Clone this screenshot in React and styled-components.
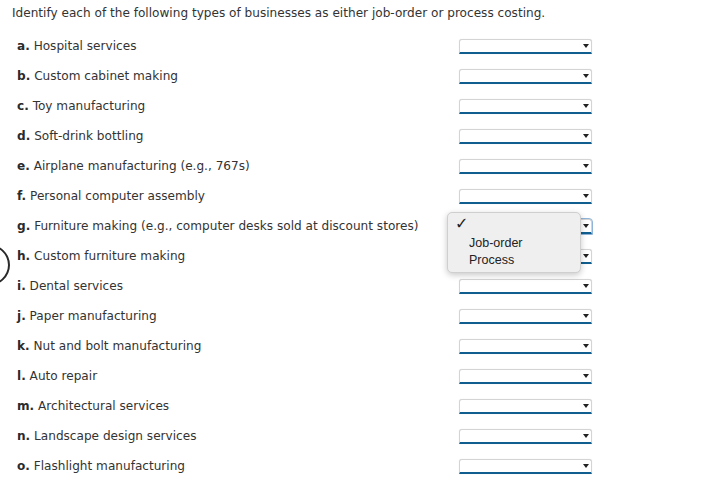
import React from 'react';
import styled, { createGlobalStyle } from 'styled-components';

const GlobalStyle = createGlobalStyle`
  html, body {
    margin: 0;
    padding: 0;
    background: #ffffff;
  }
  body {
    font-family: "DejaVu Sans", Verdana, sans-serif;
    color: #333333;
  }
`;

const ITEMS = [
  ['a.', 'Hospital services'],
  ['b.', 'Custom cabinet making'],
  ['c.', 'Toy manufacturing'],
  ['d.', 'Soft-drink bottling'],
  ['e.', 'Airplane manufacturing (e.g., 767s)'],
  ['f.', 'Personal computer assembly'],
  ['g.', 'Furniture making (e.g., computer desks sold at discount stores)'],
  ['h.', 'Custom furniture making'],
  ['i.', 'Dental services'],
  ['j.', 'Paper manufacturing'],
  ['k.', 'Nut and bolt manufacturing'],
  ['l.', 'Auto repair'],
  ['m.', 'Architectural services'],
  ['n.', 'Landscape design services'],
  ['o.', 'Flashlight manufacturing'],
];

const Page = styled.div`
  position: relative;
  width: 723px;
  height: 501px;
  overflow: hidden;
`;

const Title = styled.p`
  margin: 0;
  padding: 5px 0 10px 12px;
  font-size: 12.1px;
  line-height: 16px;
  color: #333333;
`;

const List = styled.div`
  display: flex;
  flex-direction: column;
`;

const Row = styled.div`
  position: relative;
  display: grid;
  grid-template-columns: 442px 133px;
  align-items: center;
  height: 30px;
  padding-left: 17px;
`;

const Label = styled.span`
  font-size: 12.1px;
  line-height: 16px;
  color: #333333;
  white-space: nowrap;
`;

const Letter = styled.b`
  font-weight: bold;
  color: #2b2b2b;
`;

const Select = styled.div`
  position: relative;
  height: 15px;
  box-sizing: border-box;
  background: #ffffff;
  border: 1px solid #d4d4d4;
  border-bottom: 2px solid #0f5e8f;
  border-radius: 3px 3px 0 0;
  box-shadow: 0 0 1px rgba(0, 0, 0, 0.15);
  outline: ${p => (p.focused ? '1px solid #8fb3d9' : 'none')};
`;

const Arrow = styled.span`
  position: absolute;
  right: 2px;
  top: 4px;
  width: 0;
  height: 0;
  border-left: 3.5px solid transparent;
  border-right: 3.5px solid transparent;
  border-top: 4px solid #222222;
`;

const Menu = styled.div`
  position: absolute;
  left: 447px;
  top: 1px;
  width: 134px;
  height: 61px;
  box-sizing: border-box;
  background: #efefef;
  border: 1px solid #cfcfcf;
  border-radius: 5px;
  box-shadow: 0 2px 6px rgba(0, 0, 0, 0.22);
  padding: 2px 0 0 0;
  font-family: "Liberation Sans", Arial, sans-serif;
  font-size: 12.5px;
  color: #222222;
  z-index: 2;
`;

const MenuItem = styled.div`
  padding-left: 21px;
  height: 17px;
  line-height: 17px;
`;

const CheckItem = styled.div`
  padding-left: 7px;
  height: 20px;
  line-height: 18px;
  font-size: 16px;
  font-weight: bold;
  font-family: "DejaVu Sans", sans-serif;
`;

const Ring = styled.div`
  position: absolute;
  left: -34px;
  top: 244px;
  width: 40px;
  height: 38px;
  border: 2px solid #2a2a2a;
  border-radius: 50%;
`;

const App = () => (
  <Page>
    <GlobalStyle />
    <Title>Identify each of the following types of businesses as either job-order or process costing.</Title>
    <List>
      {ITEMS.map(([letter, text], i) => (
        <Row key={letter}>
          <Label>
            <Letter>{letter}</Letter> {text}
          </Label>
          <Select focused={i === 6}>
            <Arrow />
          </Select>
          {i === 6 && (
            <Menu>
              <CheckItem>✓</CheckItem>
              <MenuItem>Job-order</MenuItem>
              <MenuItem>Process</MenuItem>
            </Menu>
          )}
        </Row>
      ))}
    </List>
    <Ring />
  </Page>
);

export default App;
